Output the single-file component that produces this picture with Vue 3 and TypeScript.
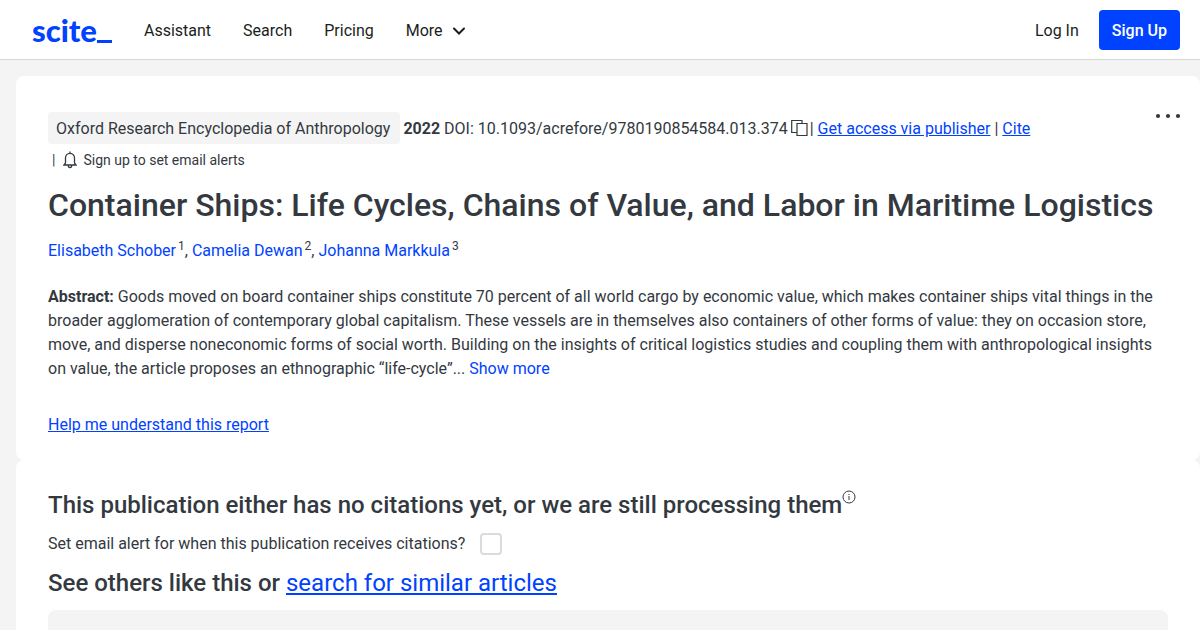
<script setup lang="ts">
import { ref } from 'vue'

interface Author {
  name: string
  mark: number
}

const navLinks: string[] = ['Assistant', 'Search', 'Pricing']
const authors: Author[] = [
  { name: 'Elisabeth Schober', mark: 1 },
  { name: 'Camelia Dewan', mark: 2 },
  { name: 'Johanna Markkula', mark: 3 },
]
const emailAlert = ref(false)
</script>

<template>
  <div class="page">
    <header class="header">
      <a class="logo" href="#" aria-label="scite home">scite<span class="cursor"></span></a>
      <nav class="nav">
        <a v-for="link in navLinks" :key="link" class="nav-item" href="#">{{ link }}</a>
        <button class="nav-item more" type="button">
          More
          <svg width="14" height="10" viewBox="0 0 14 10" fill="none" stroke="currentColor" stroke-width="2">
            <path d="M2 2.500 7 7.500 12 2.500" stroke-linecap="round" />
          </svg>
        </button>
      </nav>
      <a class="nav-item login" href="#">Log In</a>
      <button class="signup" type="button">Sign Up</button>
    </header>

    <main class="main">
      <section class="card paper">
        <button class="menu" type="button" aria-label="More options">
          <svg width="26" height="6" viewBox="0 0 26 6" fill="currentColor">
            <circle cx="3" cy="3" r="2.1" />
            <circle cx="13" cy="3" r="2.1" />
            <circle cx="23" cy="3" r="2.1" />
          </svg>
        </button>
        <div class="meta">
          <span class="journal">Oxford Research Encyclopedia of Anthropology</span>
          <span class="doi"><b>2022</b> DOI: 10.1093/acrefore/9780190854584.013.374</span>
          <button class="copy" type="button" aria-label="Copy DOI">
            <svg width="17" height="18" viewBox="0 0 17 18" fill="none" stroke="currentColor" stroke-width="1.2">
              <path d="M6 13.500H.7V1.500H11V4.500" />
              <path d="M6 4.500H16V16.500H6z" />
            </svg>
          </button>
          <span class="links">| <a href="#">Get access via publisher</a> | <a href="#">Cite</a></span>
        </div>
        <div class="alerts">
          <span>|</span>
          <button class="bell" type="button">
            <svg width="14" height="18" viewBox="0 0 14 18" fill="none" stroke="currentColor" stroke-width="1.3">
              <path d="M7 .5v2M1 14h12L11.500 12V7C11.500 4.300 9.600 2.300 7 2.300S2.500 4.300 2.500 7v5zM5.300 14.500c0 2.800 3.400 2.800 3.400 0" />
            </svg>
            Sign up to set email alerts
          </button>
        </div>
        <h1 class="title">Container Ships: Life Cycles, Chains of Value, and Labor in Maritime Logistics</h1>
        <p class="authors">
          <span v-for="(author, i) in authors" :key="author.name"><a href="#">{{ author.name }}</a><sup>{{ author.mark }}</sup><template v-if="i < authors.length - 1">, </template></span>
        </p>
        <p class="abstract">
          <b>Abstract:</b> Goods moved on board container ships constitute 70 percent of all world cargo by economic value, which makes container ships vital things in the
          broader agglomeration of contemporary global capitalism. These vessels are in themselves also containers of other forms of value: they on occasion store,
          move, and disperse noneconomic forms of social worth. Building on the insights of critical logistics studies and coupling them with anthropological insights
          on value, the article proposes an ethnographic “life-cycle”... <button class="show" type="button">Show more</button>
        </p>
        <a class="help" href="#">Help me understand this report</a>
      </section>

      <section class="card citations">
        <h2 class="heading">
          <span>This publication either has no citations yet, or we are still processing them</span>
          <svg class="info" width="14" height="14" viewBox="0 0 14 14" fill="none" stroke="currentColor">
            <circle cx="7" cy="7" r="6" />
            <path d="M7 6v4M7 4v1" />
          </svg>
        </h2>
        <label class="alert-row">
          Set email alert for when this publication receives citations?
          <input v-model="emailAlert" type="checkbox" />
        </label>
        <h2 class="heading">See others like this or&nbsp;<a href="#">search for similar articles</a></h2>
        <div class="panel"></div>
      </section>
    </main>
  </div>
</template>

<style>
html,
body {
  margin: 0;
  background: #f4f4f4;
}
</style>

<style scoped>
.page {
  font: 16px/24px Roboto, "Liberation Sans", sans-serif;
  color: #33393f;
}
a {
  color: #0042ff;
}
button {
  padding: 0;
  border: 0;
  background: none;
  color: inherit;
  font: inherit;
  cursor: pointer;
}
.header {
  display: flex;
  align-items: center;
  height: 60px;
  box-sizing: border-box;
  padding: 0 20px 0 32px;
  background: #fff;
  border-bottom: 1px solid #d8d8d8;
}
.logo {
  display: flex;
  align-items: flex-end;
  margin-right: 32px;
  font: 900 31px/40px Lato, sans-serif;
  text-decoration: none;
}
.cursor {
  width: 15px;
  height: 3px;
  margin-bottom: 7px;
  background: #0042ff;
}
.nav {
  display: flex;
  gap: 32px;
  flex: 1;
}
.nav-item {
  padding-top: 2px;
  color: #1b1d20;
  text-decoration: none;
}
.more {
  display: flex;
  align-items: center;
  gap: 9px;
}
.login {
  margin-right: 20px;
}
.signup {
  height: 40px;
  padding: 2px 13px 0;
  border-radius: 4px;
  background: #0042ff;
  color: #fff;
  font-weight: 500;
}
.main {
  padding: 16px 0 0 16px;
}
.card {
  position: relative;
  border-radius: 8px;
  background: #fff;
}
.paper {
  padding: 36px 32px 23px;
}
.citations {
  padding: 30px 32px 0;
  border-radius: 8px 8px 0 0;
}
.menu {
  position: absolute;
  top: 37px;
  right: 19px;
  display: flex;
}
.meta {
  display: flex;
  align-items: center;
  white-space: nowrap;
}
.journal {
  padding: 5px 10px 3px 8px;
  margin-right: 3px;
  border-radius: 4px;
  background: #f4f4f4;
}
.doi,
.links {
  padding-top: 2px;
}
.copy {
  display: flex;
  margin: 0 2px 0 3px;
}
.alerts {
  display: flex;
  align-items: center;
  gap: 8px;
  height: 32px;
  padding-left: 4px;
  font-size: 14px;
}
.bell {
  display: flex;
  align-items: center;
  gap: 6px;
}
.title {
  margin: 8px 0 13px;
  font-size: 32px;
  line-height: 42px;
  font-weight: 500;
}
.authors {
  margin: 0 0 22px;
}
.authors a {
  text-decoration: none;
}
sup {
  margin-left: 2px;
  font-size: 12px;
  line-height: 0;
}
.abstract {
  margin: 0 0 32px;
}
.show {
  color: #0042ff;
}
.help {
  display: inline-block;
}
.heading {
  display: flex;
  margin: 0;
  font-size: 24px;
  line-height: 30px;
  font-weight: 500;
}
.heading a {
  font-weight: 400;
}
.alert-row {
  display: flex;
  align-items: center;
  gap: 15px;
  margin: 12px 0;
}
input {
  appearance: none;
  width: 22px;
  height: 22px;
  margin: 0;
  border: 2px solid #dcdbd7;
  border-radius: 4px;
  background: #fff;
}
.panel {
  height: 20px;
  margin-top: 12px;
  border-radius: 8px 8px 0 0;
  background: #f4f4f4;
}
</style>
